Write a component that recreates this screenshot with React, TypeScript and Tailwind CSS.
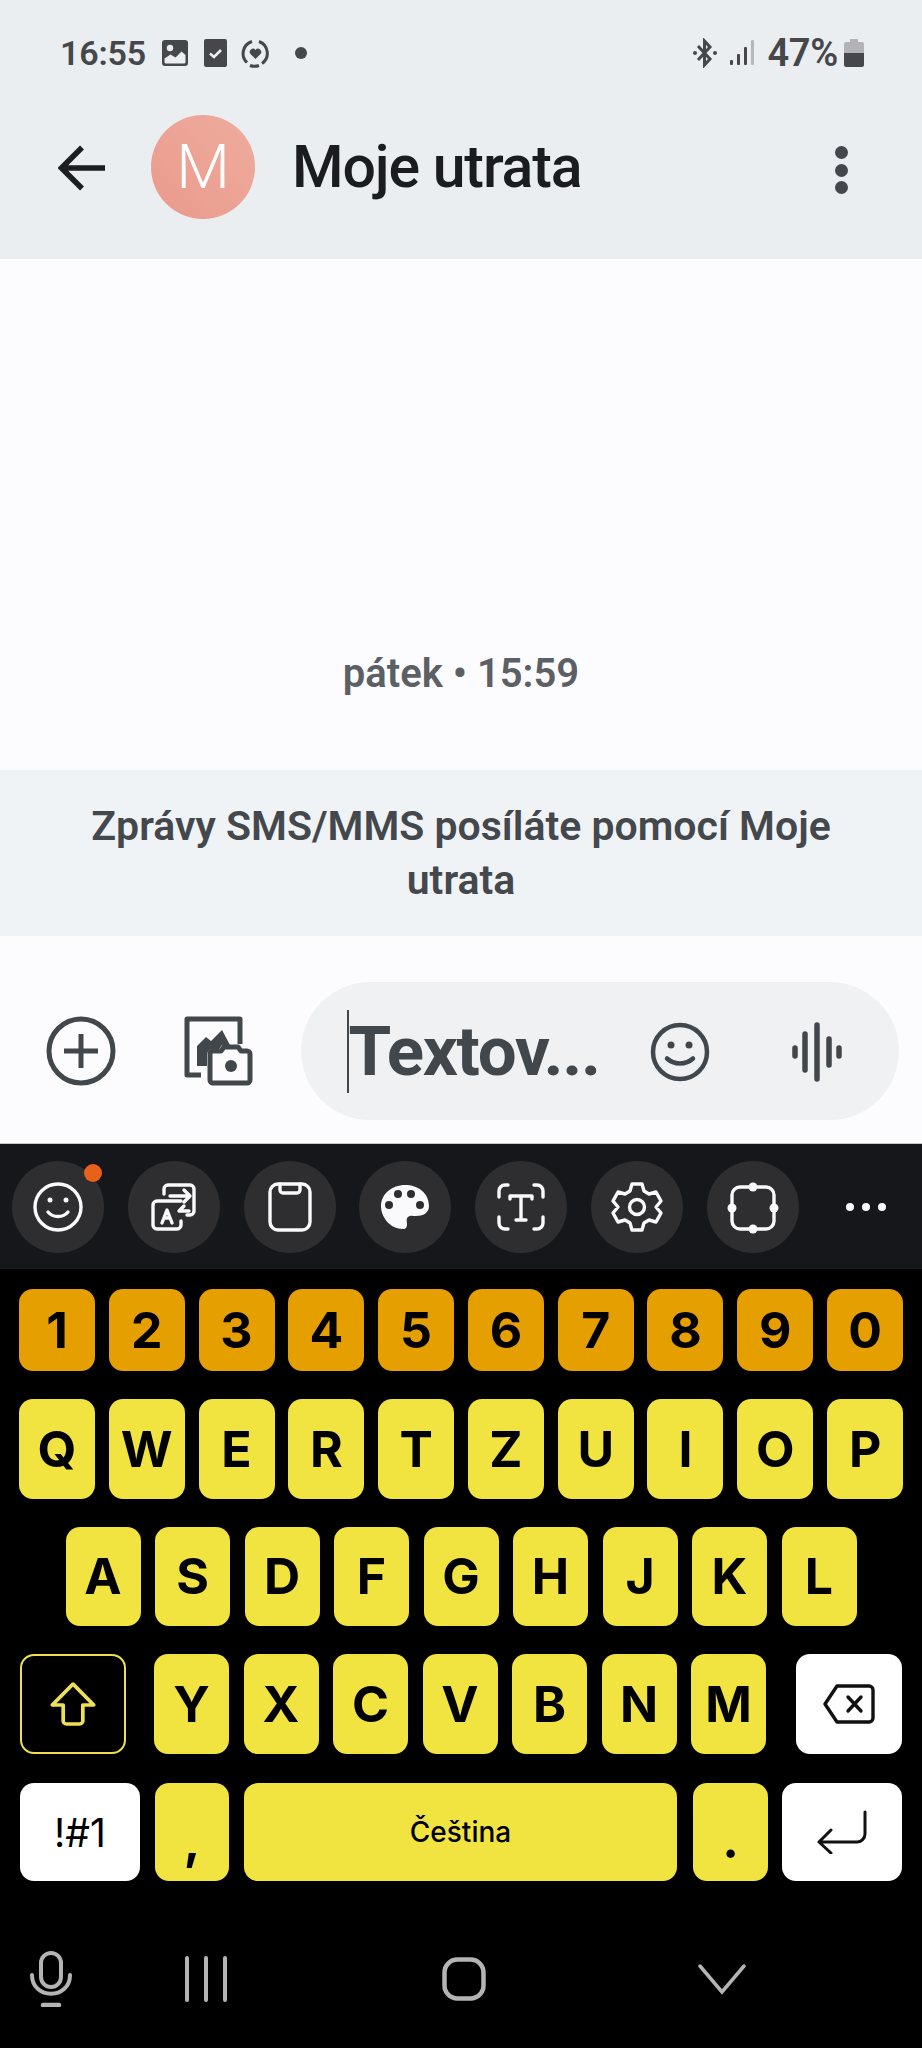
const keyFont = { fontFamily: '"Inter", "Liberation Sans", sans-serif' };

function Key({ label, className = "" }: { label: string; className?: string }) {
  return (
    <div className={`flex items-center justify-center rounded-[14px] bg-[#f1e340] text-[50px] font-bold text-black ${className || "w-[76px]"}`}>
      {label}
    </div>
  );
}

function ToolButton({ children }: { children: React.ReactNode }) {
  return <div className="relative flex h-[92px] w-[92px] items-center justify-center rounded-full bg-[#2e2e31]">{children}</div>;
}

function ToolIcon({ children }: { children: React.ReactNode }) {
  return (
    <svg viewBox="0 0 56 56" className="h-[56px] w-[56px]" fill="none" stroke="#fafafc" strokeWidth="3.4" strokeLinecap="round" strokeLinejoin="round">
      {children}
    </svg>
  );
}

function StatusBar() {
  return (
    <div className="flex h-[83px] items-start pl-[60px] pr-[58px] pt-[39px] text-[#45474b]">
      <div className="flex h-[28px] items-center text-[34px] font-semibold leading-none tracking-[-0.2px]">
        <span className="w-[102px]">16:55</span>
        <svg viewBox="0 0 26 26" className="h-[26px] w-[26px]">
          <rect width="26" height="26" rx="3" fill="#45474b" />
          <circle cx="8" cy="8" r="3.2" fill="#ebeef1" />
          <path d="M2.5 22v-3.5l6-4 5 3 6-6 4 3.500V22a1.500 1.500 0 0 1-1.500 1.500H4A1.500 1.500 0 0 1 2.500 22z" fill="#ebeef1" />
        </svg>
        <svg viewBox="0 0 23 28" className="ml-[16px] h-[28px] w-[23px]">
          <rect width="23" height="28" rx="2" fill="#45474b" />
          <path d="M6 14.500l4 3.500 7-7" fill="none" stroke="#ebeef1" strokeWidth="2.600" />
        </svg>
        <svg viewBox="0 0 29 29" className="ml-[14px] h-[29px] w-[29px]" fill="none" stroke="#45474b" strokeWidth="3">
          <path d="M11 2.500a12.500 12.500 0 0 0-5 21M18 2.500a12.500 12.500 0 0 1 3 22M9 26.500a12.500 12.500 0 0 0 9 0" />
          <path d="M14.500 20l-5-5a3 3 0 0 1 5-4 3 3 0 0 1 5 4z" fill="#45474b" stroke="none" />
        </svg>
        <div className="ml-[25px] h-[12px] w-[12px] rounded-full bg-[#45474b]" />
      </div>
      <div className="ml-auto flex h-[28px] items-center">
        <svg viewBox="0 0 24 30" className="h-[30px] w-[24px]" fill="none" stroke="#45474b" strokeWidth="3">
          <path d="M5 8l12 13-5.500 6V3L17 9 5 22" />
          <circle cx="2" cy="15" r="2" fill="#45474b" stroke="none" />
          <circle cx="22" cy="15" r="2" fill="#45474b" stroke="none" />
        </svg>
        <svg viewBox="0 0 24 26" className="ml-[13px] h-[26px] w-[24px]">
          <rect x="0" y="20" width="3" height="5" rx="1" fill="#45474b" />
          <rect x="7" y="14" width="3" height="11" rx="1" fill="#45474b" />
          <rect x="14" y="7" width="3" height="18" rx="1" fill="#45474b" />
          <rect x="21" y="0" width="3" height="25" rx="1" fill="#b5b7ba" />
        </svg>
        <span className="ml-[13px] text-[38px] font-semibold leading-none tracking-[-0.3px]">47%</span>
        <svg viewBox="0 0 20 28" className="ml-[6px] h-[28px] w-[20px]">
          <path d="M6 0h8v3h4a2 2 0 0 1 2 2v9H0V5a2 2 0 0 1 2-2h4z" fill="#b1b3b6" />
          <path d="M0 14h20v12a2 2 0 0 1-2 2H2a2 2 0 0 1-2-2z" fill="#45474b" />
        </svg>
      </div>
    </div>
  );
}

function Header() {
  return (
    <div className="flex h-[176px] items-start bg-[#ebeef1] pl-[58px] pr-[74px]">
      <svg viewBox="0 0 48 46" className="mt-[62px] h-[46px] w-[48px]" fill="none" stroke="#1b1d20" strokeWidth="5.500" strokeLinejoin="miter">
        <path d="M24 2.500L3.500 23 24 43.500M4 23h43" />
      </svg>
      <div className="ml-[45px] mt-[32px] flex h-[104px] w-[104px] items-center justify-center rounded-full bg-gradient-to-tr from-[#ea9a8c] to-[#eeac9d] text-[62px] font-light leading-none text-white">M</div>
      <div className="ml-[37px] mt-[50px] text-[59px] font-medium leading-[68px] tracking-[-1.1px] text-[#1a1c1f]">Moje utrata</div>
      <div className="ml-auto mt-[63px] flex flex-col gap-[4.500px]">
        <div className="h-[13px] w-[13px] rounded-full bg-[#44474c]" />
        <div className="h-[13px] w-[13px] rounded-full bg-[#44474c]" />
        <div className="h-[13px] w-[13px] rounded-full bg-[#44474c]" />
      </div>
    </div>
  );
}

function Composer() {
  return (
    <div className="flex h-[207px] items-start bg-[#fcfcff] pl-[46px] pt-[46px]">
      <div className="flex h-[138px] items-center">
        <svg viewBox="0 0 70 70" className="h-[70px] w-[70px]" fill="none" stroke="#42474c" strokeWidth="5">
          <circle cx="35" cy="35" r="32" />
          <path d="M35 18v34M18 35h34" />
        </svg>
        <svg viewBox="0 0 70 70" className="ml-[68px] h-[70px] w-[70px]" fill="none" stroke="#42474c" strokeWidth="5" strokeLinejoin="round">
          <path d="M17 59H3V3h53v25" />
          <path d="M13 50V30l9-9 5 4 11-11 8 15h-8l-3 4h-6a6 6 0 0 0-6 6v11z" fill="#42474c" stroke="none" />
          <path d="M26 38a3 3 0 0 1 3-3h8l3-4h14l3 4h6a3 3 0 0 1 3 3v26a3 3 0 0 1-3 3H29a3 3 0 0 1-3-3z" />
          <circle cx="47" cy="50" r="6" fill="#42474c" stroke="none" />
        </svg>
      </div>
      <div className="relative ml-[47px] flex h-[138px] w-[598px] items-center rounded-full bg-[#f0f1f3] pl-[46px]">
        <div className="h-[83px] w-[1.500px] bg-[#42474c]" />
        <span className="text-[69px] font-bold leading-none tracking-[-1.300px] text-[#42474c]">Textov...</span>
        <svg viewBox="0 0 60 60" className="absolute left-[349px] top-[40px] h-[60px] w-[60px]" fill="none" stroke="#42474c" strokeWidth="4.500" strokeLinecap="round">
          <circle cx="30" cy="30" r="27" />
          <circle cx="21" cy="23" r="3.500" fill="#42474c" stroke="none" />
          <circle cx="39" cy="23" r="3.500" fill="#42474c" stroke="none" />
          <path d="M17 36.500c7 6.500 19 6.500 26 0" />
        </svg>
        <svg viewBox="0 0 50 60" className="absolute left-[491px] top-[40px] h-[60px] w-[50px]" fill="none" stroke="#42474c" strokeWidth="5.500" strokeLinecap="round">
          <path d="M3 26v8M13 12v36M25 3v54M37 17v26M47 26v8" />
        </svg>
      </div>
    </div>
  );
}

function Toolbar() {
  return (
    <div className="flex h-[126px] items-start gap-[23.800px] border-t border-[#c8c8ca] bg-[#16171a] pl-[12px] pt-[17px]">
      <ToolButton>
        <ToolIcon>
          <circle cx="28" cy="28" r="23" />
          <circle cx="20" cy="21" r="2.500" fill="#fafafc" stroke="none" />
          <circle cx="36" cy="21" r="2.500" fill="#fafafc" stroke="none" />
          <path d="M18 33c5 6 15 6 20 0" />
        </ToolIcon>
        <div className="absolute right-[2px] top-[3px] h-[18px] w-[18px] rounded-full bg-[#e8611a]" />
      </ToolButton>
      <ToolButton>
        <ToolIcon>
          <path d="M18 15v-5a4 4 0 0 1 4-4h22a4 4 0 0 1 4 4v22a4 4 0 0 1-4 4h-3M24 17h20M38 11l6 6-6 6" />
          <path d="M35 22H11a4 4 0 0 0-4 4v20a4 4 0 0 0 4 4h20a4 4 0 0 0 4-4v-4" />
          <path d="M16 44l5-13 5 13M18 39h6M43 32H33l5-5" />
        </ToolIcon>
      </ToolButton>
      <ToolButton>
        <ToolIcon>
          <rect x="8" y="5" width="40" height="46" rx="8" />
          <path d="M18 5v6a3 3 0 0 0 3 3h14a3 3 0 0 0 3-3V5" />
        </ToolIcon>
      </ToolButton>
      <ToolButton>
        <svg viewBox="0 0 56 56" className="h-[56px] w-[56px]">
          <path d="M28 6C15 6 4 15 4 27c0 11 9 23 22 23 3 0 4-2 4-5 0-3-1-5 1-7 2-2 5-1 8-1 7 0 13-3 13-10C52 14 41 6 28 6z" fill="#fafafc" />
          <circle cx="12" cy="26" r="4" fill="#2e2e31" />
          <circle cx="21" cy="15" r="4" fill="#2e2e31" />
          <circle cx="34" cy="15" r="4" fill="#2e2e31" />
          <circle cx="43" cy="26" r="4" fill="#2e2e31" />
        </svg>
      </ToolButton>
      <ToolButton>
        <ToolIcon>
          <path d="M6 18v-6a6 6 0 0 1 6-6h3M41 6h3a6 6 0 0 1 6 6v6M50 38v6a6 6 0 0 1-6 6h-3M15 50h-3a6 6 0 0 1-6-6v-6" />
          <path d="M17 20v-3h22v3M28 17v24M23 41h10" />
        </ToolIcon>
      </ToolButton>
      <ToolButton>
        <ToolIcon>
          <path d="M23 5h10l2 7 5 3 7-2 5 9-5 6 5 6-5 9-7-2-5 3-2 7H23l-2-7-5-3-7 2-5-9 5-6-5-6 5-9 7 2 5-3z" />
          <circle cx="28" cy="28" r="7.500" />
        </ToolIcon>
      </ToolButton>
      <ToolButton>
        <svg viewBox="0 0 56 56" className="h-[56px] w-[56px]" fill="none" stroke="#fafafc" strokeWidth="3.400">
          <rect x="7" y="8" width="42" height="42" rx="8" />
          <circle cx="28" cy="8" r="4.500" fill="#fafafc" stroke="none" />
          <circle cx="28" cy="50" r="4.500" fill="#fafafc" stroke="none" />
          <circle cx="7" cy="29" r="4.500" fill="#fafafc" stroke="none" />
          <circle cx="49" cy="29" r="4.500" fill="#fafafc" stroke="none" />
        </svg>
      </ToolButton>
      <div className="flex h-[92px] items-center gap-[8px] pl-[23px]">
        <div className="h-[8px] w-[8px] rounded-full bg-[#fafafc]" />
        <div className="h-[8px] w-[8px] rounded-full bg-[#fafafc]" />
        <div className="h-[8px] w-[8px] rounded-full bg-[#fafafc]" />
      </div>
    </div>
  );
}

function Keyboard() {
  return (
    <div className="flex flex-1 flex-col bg-black pt-[20px]" style={keyFont}>
      <div className="flex h-[82px] justify-center gap-[13.800px]">
        {"1234567890".split("").map((n) => (
          <Key key={n} label={n} className="w-[76px] bg-[#e5a000]!" />
        ))}
      </div>
      <div className="mt-[28px] flex h-[100px] justify-center gap-[13.800px]">
        {"QWERTZUIOP".split("").map((k) => (
          <Key key={k} label={k} />
        ))}
      </div>
      <div className="mt-[28px] flex h-[99px] justify-center gap-[14.500px]">
        {"ASDFGHJKL".split("").map((k) => (
          <Key key={k} label={k} className="w-[75px]" />
        ))}
      </div>
      <div className="mt-[28px] flex h-[100px] px-[20px]">
        <div className="flex w-[106px] items-center justify-center rounded-[14px] border-2 border-[#ede052]">
          <svg viewBox="0 0 44 46" className="h-[46px] w-[48px]" fill="none" stroke="#ede052" strokeWidth="3.400" strokeLinejoin="round" preserveAspectRatio="none">
            <path d="M22 3L3 24h10v16a3 3 0 0 0 3 3h12a3 3 0 0 0 3-3V24h10z" />
          </svg>
        </div>
        <div className="ml-[28px] flex gap-[14.500px]">
          {"YXCVBNM".split("").map((k) => (
            <Key key={k} label={k} className="w-[75px]" />
          ))}
        </div>
        <div className="ml-auto flex w-[106px] items-center justify-center rounded-[14px] bg-white">
          <svg viewBox="0 0 52 40" className="h-[40px] w-[52px]" fill="none" stroke="#111" strokeWidth="3.400" strokeLinejoin="round" strokeLinecap="round">
            <path d="M14 2h32a4 4 0 0 1 4 4v28a4 4 0 0 1-4 4H14L2 20z" />
            <path d="M25 13l13 14M38 13L25 27" />
          </svg>
        </div>
      </div>
      <div className="mt-[29px] flex h-[98px] px-[20px]">
        <div className="flex w-[120px] items-center justify-center rounded-[14px] bg-white text-[39px] leading-none text-black">!#1</div>
        <Key label="," className="ml-[15px] w-[74px] items-end pb-[16px] font-black leading-none" />
        <div className="ml-[15px] flex w-[433px] items-center justify-center rounded-[14px] bg-[#f1e340] text-[28px] font-medium text-black">Čeština</div>
        <Key label="." className="ml-[16px] w-[75px] items-end pb-[16px] font-black leading-none" />
        <div className="ml-auto flex w-[120px] items-center justify-center rounded-[14px] bg-white">
          <svg viewBox="0 0 50 44" className="h-[44px] w-[50px]" fill="none" stroke="#111" strokeWidth="3" strokeLinecap="round" strokeLinejoin="round">
            <path d="M48 2v22a8 8 0 0 1-8 8H3M14 20L2 32l12 11" />
          </svg>
        </div>
      </div>
      <div className="mt-[58px] flex h-[80px] items-center">
        <svg viewBox="0 0 44 56" className="ml-[29px] h-[56px] w-[44px]" fill="none" stroke="#b4b4b4" strokeWidth="4" strokeLinecap="round">
          <rect x="12" y="2" width="20" height="34" rx="10" />
          <path d="M3 24c0 25 38 25 38 0" />
          <path d="M14 54h16" strokeWidth="4.500" />
        </svg>
        <svg viewBox="0 0 44 46" className="ml-[111px] h-[46px] w-[44px]" stroke="#b4b4b4" strokeWidth="4" strokeLinecap="round">
          <path d="M3 2v42M22 2v42M41 2v42" />
        </svg>
        <svg viewBox="0 0 44 44" className="ml-[214px] h-[44px] w-[44px]" fill="none" stroke="#b4b4b4" strokeWidth="4.500">
          <rect x="2.500" y="2.500" width="39" height="39" rx="13" />
        </svg>
        <svg viewBox="0 0 48 32" className="ml-[212px] h-[32px] w-[48px]" fill="none" stroke="#b4b4b4" strokeWidth="3.500" strokeLinecap="round">
          <path d="M2 3l22 26L46 3" />
        </svg>
      </div>
    </div>
  );
}

export default function App() {
  return (
    <div className="flex h-[2048px] w-[922px] flex-col overflow-hidden bg-[#fcfcff]" style={{ fontFamily: '"Roboto", "Liberation Sans", sans-serif' }}>
      <div className="bg-[#ebeef1]">
        <StatusBar />
      </div>
      <Header />
      <div className="flex h-[511px] flex-col items-center justify-end pb-[74px] text-[40px] font-semibold leading-[44px] text-[#5c5f64]">pátek • 15:59</div>
      <div className="flex h-[166px] items-center justify-center bg-[#f0f3f6] px-[60px] text-center text-[41px] font-semibold leading-[54px] text-[#44484d]">
        <p>Zprávy SMS/MMS posíláte pomocí Moje utrata</p>
      </div>
      <Composer />
      <Toolbar />
      <Keyboard />
    </div>
  );
}
